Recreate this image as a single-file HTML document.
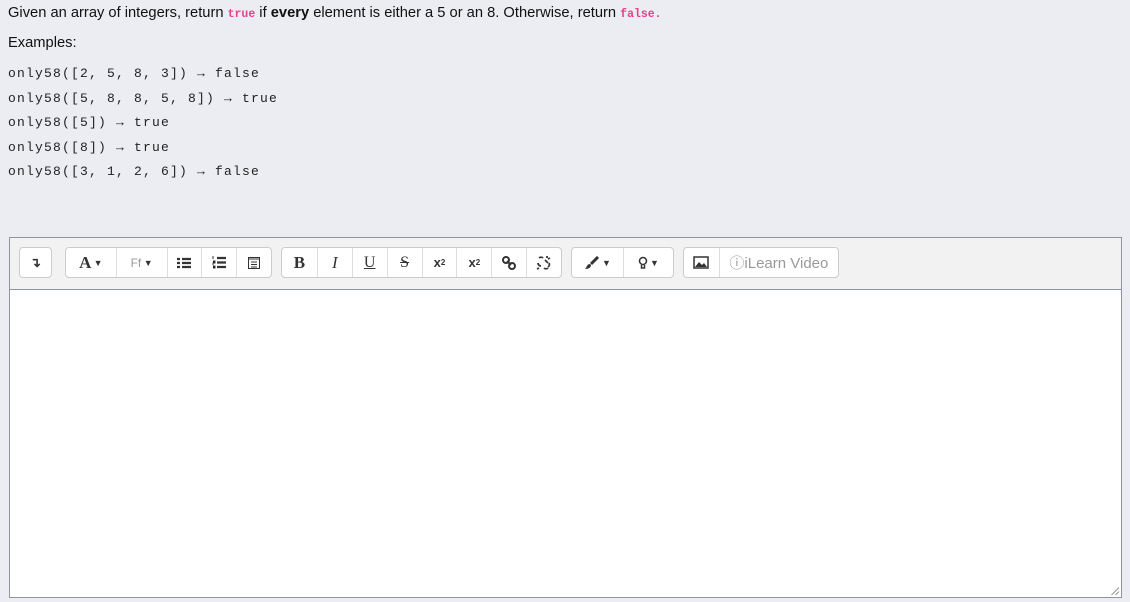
<!DOCTYPE html>
<html><head><style>
body{margin:0;background:#ecedf2;font-family:"Liberation Sans",Arial,sans-serif;font-size:14.7px;color:#111;width:1130px;height:602px;overflow:hidden;position:relative}
p{margin:0;position:absolute;left:8px;white-space:nowrap}
code.k{font-family:"Liberation Mono",monospace;font-size:11.5px;color:#e83e8c;font-weight:bold}
.m{font-family:"Liberation Mono",monospace;font-size:13px;letter-spacing:1.2px;color:#222}
#ed{position:absolute;left:9px;top:237px;width:1111px;height:359px;border:1px solid #8f959e;background:#fff}
#tb{height:51px;background:#f2f2f2;border-bottom:1px solid #8f959e;position:relative}
.g{position:absolute;top:9px;height:31px;border:1px solid #ccc;border-radius:4px;background:#fff;display:flex;box-sizing:border-box}
.b{height:100%;border-left:1px solid #ddd;display:flex;align-items:center;justify-content:center;box-sizing:border-box;color:#333;font-size:13px}
.b:first-child{border-left:none}
.rs{position:absolute;right:2px;bottom:2px;width:8px;height:8px;background:linear-gradient(135deg,transparent 50%,#999 50%,#999 58%,transparent 58%,transparent 75%,#999 75%,#999 83%,transparent 83%)}
</style></head><body>
<p style="top:5px">Given an array of integers, return <code class="k">true</code> if <b>every</b> element is either a 5 or an 8. Otherwise, return <code class="k">false.</code></p>
<p style="top:35px">Examples:</p>
<p class="m" style="top:66px">only58([2, 5, 8, 3]) → false</p>
<p class="m" style="top:91px">only58([5, 8, 8, 5, 8]) → true</p>
<p class="m" style="top:115px">only58([5]) → true</p>
<p class="m" style="top:140px">only58([8]) → true</p>
<p class="m" style="top:164px">only58([3, 1, 2, 6]) → false</p>
<div id="ed"><div id="tb">
<div class="g" style="left:9px;width:33px"><div class="b" style="width:33px;font-weight:bold">↴</div></div>
<div class="g" style="left:55px;width:207px">
<div class="b" style="width:50px;font-family:'Liberation Serif';font-weight:bold;font-size:17px">A<span style="font-size:9px">&nbsp;▼</span></div>
<div class="b" style="width:51px;color:#999;font-size:12px">Ff <span style="font-size:9px;color:#333">&nbsp;▼</span></div>
<div class="b" style="width:35px"><svg width="14" height="12"><path d="M0 2h3M0 6h3M0 10h3M5 2h9M5 6h9M5 10h9" stroke="#333" stroke-width="2.2"/></svg></div>
<div class="b" style="width:35px"><svg width="14" height="13"><path d="M1 0v3M1 5h2v2H1v2M1 10h2v2H1" stroke="#333" stroke-width="1"/><path d="M5 2h9M5 6.5h9M5 11h9" stroke="#333" stroke-width="2.2"/></svg></div>
<div class="b" style="width:35px"><svg width="14" height="14"><rect x="1.5" y="1.5" width="11" height="11" fill="none" stroke="#333"/><path d="M1.5 3h11M4 6h6M4 8.5h6M4 11h6" stroke="#333"/></svg></div>
</div>
<div class="g" style="left:271px;width:281px">
<div class="b" style="width:35px;font-family:'Liberation Serif';font-weight:bold;font-size:17px">B</div>
<div class="b" style="width:35px;font-family:'Liberation Serif';font-style:italic;font-size:17px">I</div>
<div class="b" style="width:35px;font-family:'Liberation Serif';text-decoration:underline;font-size:16px">U</div>
<div class="b" style="width:35px;font-family:'Liberation Serif';text-decoration:line-through;font-size:16px">S</div>
<div class="b" style="width:35px;font-weight:bold">x<sub style="font-size:8px">2</sub></div>
<div class="b" style="width:35px;font-weight:bold">x<sup style="font-size:8px">2</sup></div>
<div class="b" style="width:35px"><svg width="16" height="16"><circle cx="5" cy="5" r="3" fill="none" stroke="#333" stroke-width="2"/><circle cx="11" cy="11" r="3" fill="none" stroke="#333" stroke-width="2"/><path d="M6 6l4 4" stroke="#333" stroke-width="2"/></svg></div>
<div class="b" style="width:35px"><svg width="16" height="16"><path d="M3 3a3 3 0 0 1 4 0M2 8a3 3 0 0 0 3 3M9 5l3 3M13 8a3 3 0 0 1-1 4M8 13a3 3 0 0 0 4 0M11 1v2M14 3l-2 1M1 14l2-1" fill="none" stroke="#333" stroke-width="1.8"/></svg></div>
</div>
<div class="g" style="left:561px;width:103px">
<div class="b" style="width:51px"><svg width="16" height="14"><path d="M14 1L7 8" stroke="#333" stroke-width="3"/><path d="M6 8c-3 0-3 3-5 5 3 0 6-1 6-4z" fill="#333"/></svg><span style="font-size:9px">&nbsp;▼</span></div>
<div class="b" style="width:51px"><svg width="10" height="14"><circle cx="5" cy="5" r="3.5" fill="none" stroke="#333" stroke-width="1.5"/><path d="M3.5 9v3h3V9" fill="none" stroke="#333" stroke-width="1.5"/></svg><span style="font-size:9px">&nbsp;▼</span></div>
</div>
<div class="g" style="left:673px;width:156px">
<div class="b" style="width:35px"><svg width="16" height="13"><rect x="1" y="1" width="14" height="11" fill="none" stroke="#333" stroke-width="1.5"/><path d="M2 11l4-5 3 3 2-2 3 4z" fill="#333"/></svg></div>
<div class="b" style="width:120px;color:#999;font-size:15px">ⓘiLearn Video</div>
</div>
</div><div class="rs"></div></div>
</body></html>
